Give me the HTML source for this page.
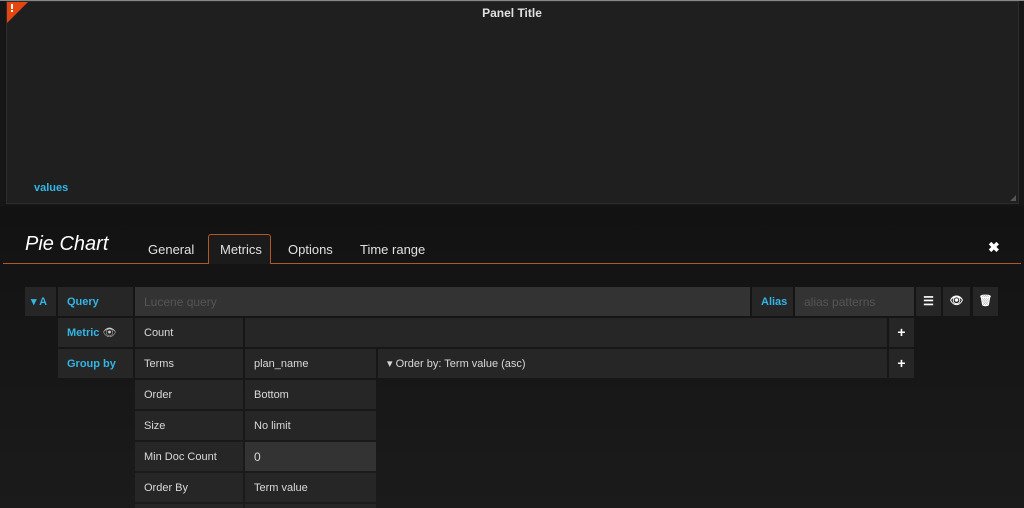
<!DOCTYPE html>
<html><head><style>
*{margin:0;padding:0;box-sizing:border-box}
html,body{width:1024px;height:508px;overflow:hidden}
body{background:#161616;font-family:"Liberation Sans",sans-serif;font-size:11px;color:#d8d9da;position:relative}
.a{position:absolute}
.c{position:absolute;background:#262626;height:29px;line-height:31px;padding-left:9px;color:#d8d9da}
.l{color:#33b5e5;font-weight:bold}
.tab{position:absolute;top:234px;height:30px;line-height:30px;font-size:13px;color:#e0e0e0}
.btn{position:absolute;background:#262626;height:29px;text-align:center;line-height:29px;color:#fff;font-weight:bold;font-size:14px}
</style></head><body>
<div class="a" style="left:0;top:0;width:1024px;height:1px;background:#888"></div>
<div class="a" style="left:6px;top:1px;width:1013px;height:203px;background:#1f1f20;border:1px solid #2c2c2c"></div>
<svg class="a" style="left:7px;top:2px" width="21" height="21"><polygon points="0,0 21,0 0,21" fill="#e5460f"/><rect x="4" y="2" width="2" height="5" fill="#fff"/><rect x="4" y="8" width="2" height="2" fill="#fff"/></svg>
<div class="a" style="left:0;top:6px;width:1024px;text-align:center;font-weight:bold;font-size:12px;color:#e0e0e0">Panel Title</div>
<div class="a l" style="left:34px;top:182px;font-size:11px">values</div>
<div class="a" style="left:1010px;top:195px;width:6px;height:6px;background:linear-gradient(135deg,transparent 50%,#555 50%)"></div>
<div class="a" style="left:0;top:206px;width:1024px;height:302px;background:linear-gradient(#121212,#1b1b1b)"></div>
<div class="a" style="left:25px;top:233px;font-size:20px;font-style:italic;color:#fff">Pie Chart</div>
<div class="a" style="left:3px;top:263px;width:1018px;height:1px;background:#b0582a"></div>
<div class="tab" style="left:148px;top:235px">General</div>
<div class="a" style="left:208px;top:234px;width:63px;height:30px;border:1px solid #b0582a;border-bottom:none;border-radius:3px 3px 0 0;background:#1b1b1b"></div>
<div class="tab" style="left:220px;top:235px">Metrics</div>
<div class="tab" style="left:288px;top:235px">Options</div>
<div class="tab" style="left:360px;top:235px">Time range</div>
<div class="a" style="left:988px;top:239px;font-size:14px;font-weight:bold;color:#fff">✖</div>

<div class="c l" style="left:25px;top:287px;width:31px;padding-left:6px">▾ A</div>
<div class="c l" style="left:58px;top:287px;width:75px">Query</div>
<div class="c" style="left:135px;top:287px;width:615px;background:#333;color:#555;font-size:12px">Lucene query</div>
<div class="c l" style="left:752px;top:287px;width:41px">Alias</div>
<div class="c" style="left:795px;top:287px;width:119px;background:#333;color:#555;font-size:12px">alias patterns</div>
<div class="btn" style="left:916px;top:287px;width:25px;font-size:12px">☰</div>
<div class="btn" style="left:943px;top:287px;width:27px;font-size:11px">👁</div>
<div class="btn" style="left:973px;top:287px;width:25px;font-size:11px">🗑</div>

<div class="c l" style="left:58px;top:318px;width:75px">Metric <span style="color:#ccc;font-weight:normal">👁</span></div>
<div class="c" style="left:135px;top:318px;width:108px">Count</div>
<div class="c" style="left:245px;top:318px;width:642px"></div>
<div class="btn" style="left:889px;top:318px;width:25px">+</div>

<div class="c l" style="left:58px;top:349px;width:75px">Group by</div>
<div class="c" style="left:135px;top:349px;width:108px">Terms</div>
<div class="c" style="left:245px;top:349px;width:131px">plan_name</div>
<div class="c" style="left:378px;top:349px;width:509px">▾ Order by: Term value (asc)</div>
<div class="btn" style="left:889px;top:349px;width:25px">+</div>

<div class="c" style="left:135px;top:380px;width:108px">Order</div>
<div class="c" style="left:245px;top:380px;width:131px">Bottom</div>
<div class="c" style="left:135px;top:411px;width:108px">Size</div>
<div class="c" style="left:245px;top:411px;width:131px">No limit</div>
<div class="c" style="left:135px;top:442px;width:108px">Min Doc Count</div>
<div class="c" style="left:245px;top:442px;width:131px;background:#333;font-size:12px">0</div>
<div class="c" style="left:135px;top:473px;width:108px">Order By</div>
<div class="c" style="left:245px;top:473px;width:131px">Term value</div>
<div class="c" style="left:135px;top:504px;width:108px;height:4px"></div>
<div class="c" style="left:245px;top:504px;width:131px;height:4px"></div>
</body></html>
